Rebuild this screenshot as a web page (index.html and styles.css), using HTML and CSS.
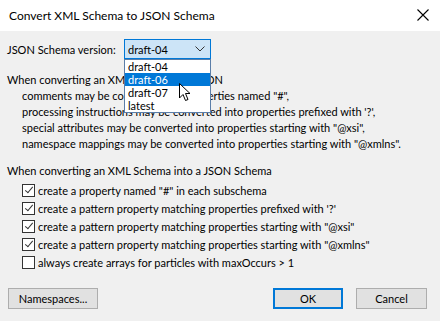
FILE: index.html
```html
<!DOCTYPE html>
<html>
<head>
<meta charset="utf-8">
<link rel="stylesheet" href="styles.css">
</head>
<body>
<div class="window">
  <div class="titlebar">
    <span class="title">Convert XML Schema to JSON Schema</span>
    <svg class="close" width="12" height="12" viewBox="0 0 12 12"><path d="M0.5 0.5 L11.5 11.5 M11.5 0.5 L0.5 11.5" stroke="#000" stroke-width="1.1" fill="none"/></svg>
  </div>
  <div class="content">
    <div class="version-row">
      <span class="label">JSON Schema version:</span>
      <div class="combo">
        <span class="combo-text">draft-04</span>
        <svg class="chevron" width="10" height="6" viewBox="0 0 10 6"><path d="M0.5 0.5 L5 5 L9.5 0.5" stroke="#333" stroke-width="1" fill="none"/></svg>
        <div class="list">
          <div class="item">draft-04</div>
          <div class="item selected">draft-06</div>
          <div class="item">draft-07</div>
          <div class="item">latest</div>
        </div>
        <svg class="cursor" width="14" height="20" viewBox="0 0 14 20"><path d="M1.5 1.5 L1.5 16 L5 12.5 L7.5 18.5 L10 17.5 L7.5 11.5 L12 11.5 Z" fill="#fff" stroke="#000" stroke-width="1" stroke-linejoin="miter"/></svg>
      </div>
    </div>
    <div class="para">
      <div class="line">When converting an XML Schema into JSON</div>
      <div class="line indent">comments may be converted into properties named "#",</div>
      <div class="line indent">processing instructions may be converted into properties prefixed with '?',</div>
      <div class="line indent">special attributes may be converted into properties starting with "@xsi",</div>
      <div class="line indent">namespace mappings may be converted into properties starting with "@xmlns".</div>
    </div>
    <div class="para2">
      <div class="line">When converting an XML Schema into a JSON Schema</div>
    </div>
    <div class="checks">
      <label class="check"><span class="box on"></span>create a property named "#" in each subschema</label>
      <label class="check"><span class="box on"></span>create a pattern property matching properties prefixed with '?'</label>
      <label class="check"><span class="box on"></span>create a pattern property matching properties starting with "@xsi"</label>
      <label class="check"><span class="box on"></span>create a pattern property matching properties starting with "@xmlns"</label>
      <label class="check"><span class="box"></span>always create arrays for particles with maxOccurs &gt; 1</label>
    </div>
    <div class="buttons">
      <button class="btn ns">Namespaces...</button>
      <div class="spacer"></div>
      <button class="btn ok">OK</button>
      <button class="btn cancel">Cancel</button>
    </div>
  </div>
</div>
</body>
</html>
```
FILE: styles.css
```css
html, body {
  margin: 0;
  padding: 0;
}
body {
  width: 440px;
  height: 321px;
  overflow: hidden;
  font-family: "Lato", "Open Sans", sans-serif;
  font-size: 11px;
  color: #000;
  background: #f0f0f0;
}
.window {
  width: 440px;
  height: 321px;
  display: flex;
  flex-direction: column;
}
.titlebar {
  height: 31px;
  background: #fff;
  display: flex;
  align-items: center;
  padding: 0 11px 0 9px;
  box-sizing: border-box;
}
.title {
  flex: 1;
  font-size: 12px;
  margin-top: -1px;
  white-space: nowrap;
}
.close {
  display: block;
  margin-top: -1px;
}
.content {
  flex: 1;
  display: flex;
  flex-direction: column;
  padding: 8px 13px 0 7px;
}
.version-row {
  display: flex;
  align-items: center;
  height: 20px;
}
.label {
  width: 117px;
  white-space: nowrap;
}
.combo {
  position: relative;
  width: 87px;
  height: 20px;
  box-sizing: border-box;
  border: 1px solid #0078d7;
  background: #cce4f7;
  display: flex;
  align-items: center;
  padding: 0 0 0 3px;
}
.combo-text {
  flex: 1;
}
.chevron {
  margin-right: 5px;
}
.list {
  position: absolute;
  left: -1px;
  top: 19px;
  width: 87px;
  box-sizing: border-box;
  border: 1px solid #5b7ea8;
  background: #fff;
  z-index: 2;
}
.item {
  height: 13px;
  line-height: 13px;
  padding-left: 3px;
}
.item.selected {
  background: #0078d7;
  color: #fff;
}
.cursor {
  position: absolute;
  left: 53px;
  top: 42px;
  z-index: 3;
}
.para {
  margin-top: 13px;
}
.line {
  height: 16px;
  line-height: 16px;
  white-space: nowrap;
}
.indent {
  padding-left: 15px;
}
.para2 {
  margin-top: 11px;
}
.checks {
  margin-top: 2px;
  display: flex;
  flex-direction: column;
}
.check {
  height: 18px;
  display: flex;
  align-items: center;
  padding-left: 15px;
  white-space: nowrap;
}
.box {
  width: 13px;
  height: 13px;
  box-sizing: border-box;
  border: 1px solid #333;
  background: #fff;
  margin-right: 3px;
  position: relative;
  flex: none;
}
.box.on::after {
  content: "";
  position: absolute;
  left: 3.5px;
  top: 0.5px;
  width: 3px;
  height: 7px;
  border-right: 1.3px solid #333;
  border-bottom: 1.3px solid #333;
  transform: rotate(40deg);
}
.buttons {
  margin-top: 17px;
  display: flex;
  padding-left: 1px;
}
.spacer {
  flex: 1;
}
.btn {
  font-family: inherit;
  font-size: 11px;
  color: #000;
  height: 21px;
  box-sizing: border-box;
  background: #e1e1e1;
  border: 1px solid #adadad;
  padding: 0;
  margin: 0;
}
.ns {
  width: 90px;
}
.ok {
  width: 70px;
  border: 2px solid #0078d7;
}
.cancel {
  width: 71px;
  margin-left: 13px;
}
```
